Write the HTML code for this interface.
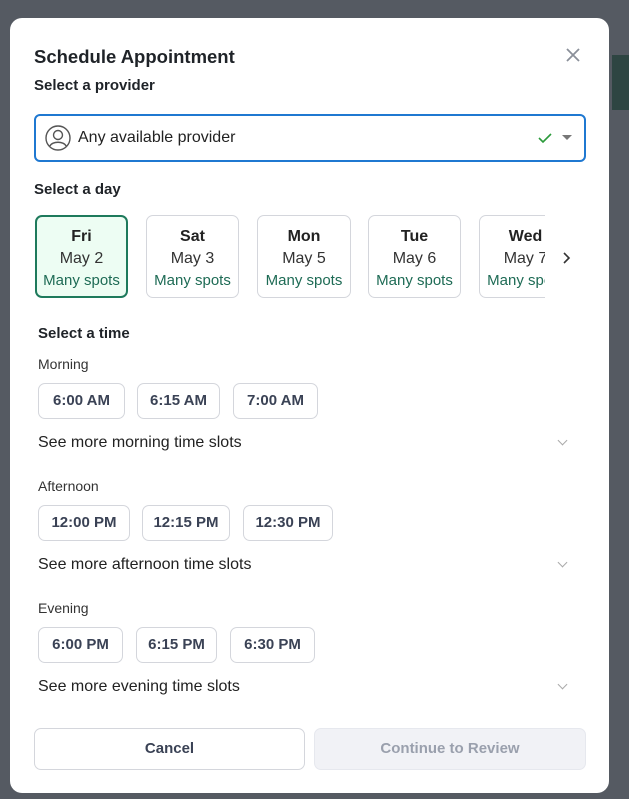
<!DOCTYPE html><html><head><style>
body{margin:0;width:629px;height:799px;background:#555a62;font-family:"Liberation Sans",sans-serif;position:relative;overflow:hidden}
.m{position:absolute;left:10px;top:18px;width:599px;height:775px;background:#fff;border-radius:12px}
.a{position:absolute}
.h{font-weight:bold;color:#1f2328}
.d{position:absolute;top:215px;width:93px;height:83px;border:1px solid #d4d6dc;border-radius:7px;box-sizing:border-box;text-align:center;background:#fff}
.d b{display:block;font-size:16px;color:#222;margin-top:12px}
.d span{display:block;font-size:16px;color:#333;margin-top:4px}
.d i{display:block;font-style:normal;font-size:15px;color:#1e6b55;margin-top:4px;white-space:nowrap}
.t{position:absolute;height:36px;border:1px solid #d4d6dc;border-radius:7px;box-sizing:border-box;font-size:15px;font-weight:bold;color:#3a4255;text-align:center;line-height:34px}
.l{position:absolute;left:38px;font-size:14px;color:#333}
.s{position:absolute;left:38px;font-size:16px;color:#222}
.c{position:absolute;left:559px;width:6px;height:6px;border-right:1px solid #aaa;border-bottom:1px solid #aaa;transform:rotate(45deg)}
</style></head><body>
<div style="position:absolute;left:612px;top:55px;width:17px;height:55px;background:#2e4542"></div>
<div class="m"></div>
<div class="a h" style="left:34px;top:46px;font-size:18.5px">Schedule Appointment</div>
<svg class="a" style="left:565px;top:47px" width="16" height="16"><path d="M2 2L14 14M14 2L2 14" stroke="#8a8f99" stroke-width="1.8"/></svg>
<div class="a h" style="left:34px;top:77px;font-size:15px">Select a provider</div>
<div class="a" style="left:34px;top:114px;width:552px;height:48px;border:2px solid #1f78d1;border-radius:6px;box-sizing:border-box"></div>
<svg class="a" style="left:45px;top:125px" width="26" height="26"><circle cx="13" cy="13" r="12" fill="none" stroke="#555" stroke-width="1.4"/><circle cx="13" cy="10" r="4.5" fill="none" stroke="#555" stroke-width="1.4"/><path d="M5 21C7 16 19 16 21 21" fill="none" stroke="#555" stroke-width="1.4"/></svg>
<div class="a" style="left:78px;top:129px;font-size:16px;color:#222">Any available provider</div>
<svg class="a" style="left:537px;top:131px" width="16" height="14"><path d="M2 7L6 11L14 3" fill="none" stroke="#2a9a3a" stroke-width="1.6"/></svg>
<svg class="a" style="left:561px;top:134px" width="12" height="8"><path d="M1 1L11 1L6 6Z" fill="#777"/></svg>
<div class="a h" style="left:34px;top:181px;font-size:15px">Select a day</div>
<div class="d" style="left:35px;border:2px solid #1e7a5c;background:#edfdf3"><b style="margin-top:11px">Fri</b><span>May 2</span><i>Many spots</i></div>
<div class="d" style="left:146px"><b>Sat</b><span>May 3</span><i>Many spots</i></div>
<div class="d" style="left:257px;width:94px"><b>Mon</b><span>May 5</span><i>Many spots</i></div>
<div class="d" style="left:368px"><b>Tue</b><span>May 6</span><i>Many spots</i></div>
<div style="position:absolute;left:479px;top:215px;width:66px;height:83px;overflow:hidden"><div class="d" style="left:0;top:0"><b>Wed</b><span>May 7</span><i>Many spots</i></div></div>
<svg class="a" style="left:561px;top:251px" width="10" height="14"><path d="M3 2L8 7L3 12" fill="none" stroke="#333" stroke-width="1.6"/></svg>
<div class="a h" style="left:38px;top:325px;font-size:15px">Select a time</div>
<div class="l" style="top:356px">Morning</div>
<div class="t" style="left:38px;top:383px;width:87px">6:00 AM</div>
<div class="t" style="left:137px;top:383px;width:83px">6:15 AM</div>
<div class="t" style="left:233px;top:383px;width:85px">7:00 AM</div>
<div class="s" style="top:434px">See more morning time slots</div><div class="c" style="top:437px"></div>
<div class="l" style="top:478px">Afternoon</div>
<div class="t" style="left:38px;top:505px;width:92px">12:00 PM</div>
<div class="t" style="left:142px;top:505px;width:88px">12:15 PM</div>
<div class="t" style="left:243px;top:505px;width:90px">12:30 PM</div>
<div class="s" style="top:556px">See more afternoon time slots</div><div class="c" style="top:559px"></div>
<div class="l" style="top:600px">Evening</div>
<div class="t" style="left:38px;top:627px;width:85px">6:00 PM</div>
<div class="t" style="left:136px;top:627px;width:81px">6:15 PM</div>
<div class="t" style="left:230px;top:627px;width:85px">6:30 PM</div>
<div class="s" style="top:678px">See more evening time slots</div><div class="c" style="top:681px"></div>
<div class="t" style="left:34px;top:728px;width:271px;height:42px;line-height:40px">Cancel</div>
<div class="t" style="left:314px;top:728px;width:272px;height:42px;line-height:40px;background:#f1f2f6;border-color:#e6e8ee;color:#9aa0ad">Continue to Review</div>
</body></html>
